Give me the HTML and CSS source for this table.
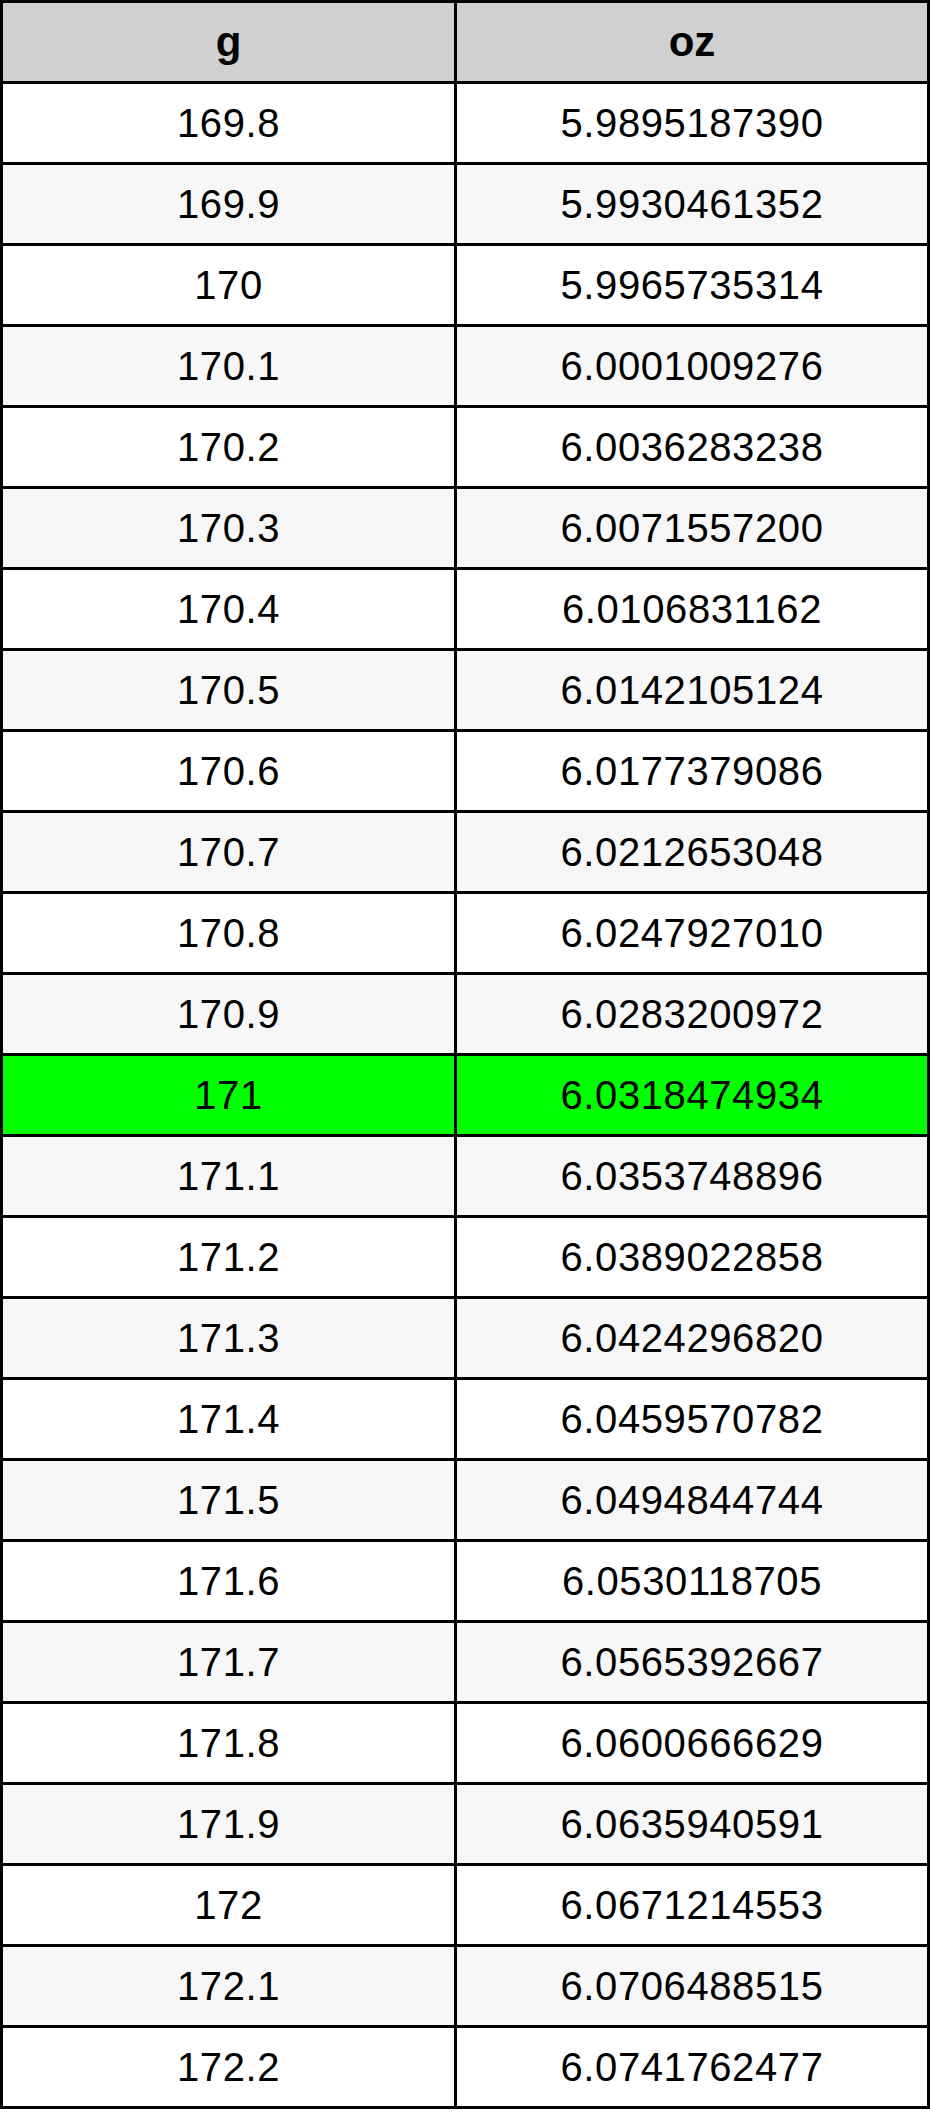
FILE: index.html
```html
<!DOCTYPE html>
<html>
<head>
<meta charset="utf-8">
<title>g to oz</title>
<link rel="stylesheet" href="styles.css">
</head>
<body>
<table class="conv">
<colgroup><col class="c1"><col class="c2"></colgroup>
<thead>
<tr><th>g</th><th>oz</th></tr>
</thead>
<tbody>
<tr><td>169.8</td><td>5.9895187390</td></tr>
<tr><td>169.9</td><td>5.9930461352</td></tr>
<tr><td>170</td><td>5.9965735314</td></tr>
<tr><td>170.1</td><td>6.0001009276</td></tr>
<tr><td>170.2</td><td>6.0036283238</td></tr>
<tr><td>170.3</td><td>6.0071557200</td></tr>
<tr><td>170.4</td><td>6.0106831162</td></tr>
<tr><td>170.5</td><td>6.0142105124</td></tr>
<tr><td>170.6</td><td>6.0177379086</td></tr>
<tr><td>170.7</td><td>6.0212653048</td></tr>
<tr><td>170.8</td><td>6.0247927010</td></tr>
<tr><td>170.9</td><td>6.0283200972</td></tr>
<tr class="hl"><td>171</td><td>6.0318474934</td></tr>
<tr><td>171.1</td><td>6.0353748896</td></tr>
<tr><td>171.2</td><td>6.0389022858</td></tr>
<tr><td>171.3</td><td>6.0424296820</td></tr>
<tr><td>171.4</td><td>6.0459570782</td></tr>
<tr><td>171.5</td><td>6.0494844744</td></tr>
<tr><td>171.6</td><td>6.0530118705</td></tr>
<tr><td>171.7</td><td>6.0565392667</td></tr>
<tr><td>171.8</td><td>6.0600666629</td></tr>
<tr><td>171.9</td><td>6.0635940591</td></tr>
<tr><td>172</td><td>6.0671214553</td></tr>
<tr><td>172.1</td><td>6.0706488515</td></tr>
<tr><td>172.2</td><td>6.0741762477</td></tr>
</tbody>
</table>
</body>
</html>
```
FILE: styles.css
```css
html, body {
  margin: 0;
  padding: 0;
  background: #fff;
}
.conv {
  width: 930px;
  table-layout: fixed;
  border-collapse: separate;
  border-spacing: 3px;
  background: #000;
  font-family: "Liberation Sans", Arial, sans-serif;
  font-size: 40px;
  color: #000;
}
.c1 { width: 451px; }
.c2 { width: 470px; }
.conv th, .conv td {
  height: 78px;
  padding: 0;
  text-align: center;
  vertical-align: middle;
  line-height: 1;
  letter-spacing: 0.6px;
}
.conv th {
  background: #d0d0d0;
  font-weight: bold;
  font-size: 42px;
  letter-spacing: 0;
}
.conv tbody tr:nth-child(odd) td { background: #fff; }
.conv tbody tr:nth-child(even) td { background: #f7f7f7; }
.conv tbody tr.hl td { background: #00ff00; }
```
